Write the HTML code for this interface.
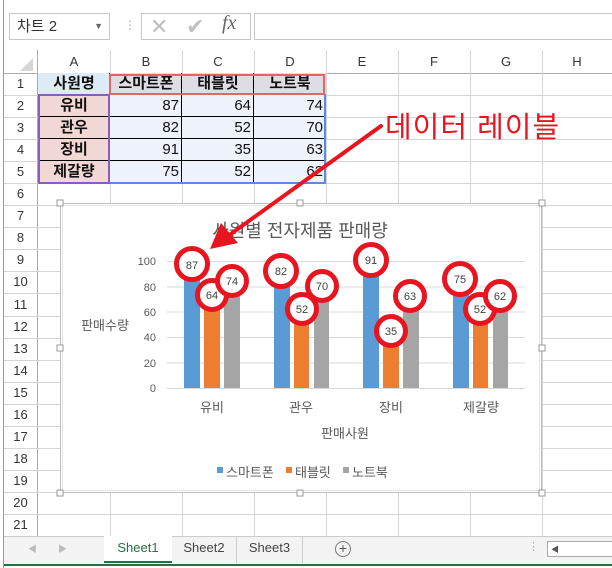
<!DOCTYPE html>
<html><head><meta charset="utf-8"><style>
*{margin:0;padding:0;box-sizing:border-box}
body{width:612px;height:568px;overflow:hidden;background:#fff;font-family:"Liberation Sans","Noto Sans CJK KR",sans-serif;position:relative}
.a{position:absolute}
.vl{position:absolute;width:1px;background:#d4d4d4}
.hl{position:absolute;height:1px;background:#d4d4d4}
.rh{position:absolute;left:3px;width:35px;text-align:center;font-size:13px;color:#333;height:22px;line-height:22px}
.ch{position:absolute;top:50px;height:23px;line-height:23px;text-align:center;font-size:13px;color:#333}
.c{position:absolute;height:22px;line-height:22px;font-size:15px;color:#111}
.b{font-weight:bold;font-size:15px}
</style></head><body>
<div class="a" style="left:3px;top:0;width:1px;height:568px;background:#999"></div>
<div class="a" style="left:9px;top:13px;width:101px;height:27px;border:1px solid #c6c6c6;font-size:15px;line-height:25px;padding-left:7px;color:#333">차트 2<span style="position:absolute;right:6px;top:0;font-size:9px;color:#666">▼</span></div>
<div class="a" style="left:124px;top:18px;font-size:12px;color:#aaa">⋮</div>
<div class="a" style="left:141px;top:13px;width:110px;height:27px;border:1px solid #c6c6c6"></div>
<div class="a" style="left:150px;top:14px;font-size:22px;color:#c0c0c0">✕</div>
<div class="a" style="left:186px;top:14px;font-size:22px;color:#c0c0c0">✔</div>
<div class="a" style="left:222px;top:12px;font-size:20px;color:#666;font-style:italic;font-family:'Liberation Serif',serif">fx</div>
<div class="a" style="left:254px;top:13px;width:360px;height:27px;border:1px solid #c6c6c6"></div>
<div class="a" style="left:20px;top:58px;width:0;height:0;border-left:13px solid transparent;border-bottom:13px solid #d6d6d6"></div>
<div class="hl" style="left:4px;top:73px;width:608px;background:#ababab"></div>
<div class="vl" style="left:37px;top:50px;height:486px;background:#ababab"></div>
<div class="vl" style="left:110px;top:50px;height:486px"></div>
<div class="vl" style="left:182px;top:50px;height:486px"></div>
<div class="vl" style="left:254px;top:50px;height:486px"></div>
<div class="vl" style="left:326px;top:50px;height:486px"></div>
<div class="vl" style="left:398px;top:50px;height:486px"></div>
<div class="vl" style="left:470px;top:50px;height:486px"></div>
<div class="vl" style="left:542px;top:50px;height:486px"></div>
<div class="ch" style="left:38px;width:72px">A</div><div class="ch" style="left:110px;width:72px">B</div><div class="ch" style="left:182px;width:72px">C</div><div class="ch" style="left:254px;width:72px">D</div><div class="ch" style="left:326px;width:72px">E</div><div class="ch" style="left:398px;width:72px">F</div><div class="ch" style="left:470px;width:72px">G</div><div class="ch" style="left:542px;width:70px">H</div>
<div id="rows"></div>
<script>
var h='';for(var i=0;i<21;i++){var t=73+i*22.05;h+='<div class="rh" style="top:'+t+'px">'+(i+1)+'</div><div class="hl" style="left:4px;top:'+(t+22)+'px;width:608px"></div>';}
document.getElementById('rows').innerHTML=h;
</script>
<div class="a" style="left:38px;top:73px;width:72px;height:22px;background:#ddebf7"></div>
<div class="a" style="left:110px;top:73px;width:216px;height:22px;background:#e0dce6"></div>
<div class="a" style="left:38px;top:95px;width:72px;height:88px;background:#f2d8d4"></div>
<div class="a" style="left:110px;top:95px;width:216px;height:88px;background:#eef2fb"></div>
<div class="a" style="left:38px;top:94px;width:288px;height:1px;background:#000"></div>
<div class="a" style="left:38px;top:116px;width:288px;height:1px;background:#000"></div>
<div class="a" style="left:38px;top:138px;width:288px;height:1px;background:#000"></div>
<div class="a" style="left:38px;top:160px;width:288px;height:1px;background:#000"></div>
<div class="a" style="left:181px;top:73px;width:1px;height:110px;background:#000"></div>
<div class="a" style="left:253px;top:73px;width:1px;height:110px;background:#000"></div>
<div class="a" style="left:109px;top:73px;width:1px;height:110px;background:#000"></div>
<div class="a" style="left:109px;top:74px;width:216px;height:21px;border:2px solid #e56565"></div>
<div class="a" style="left:38px;top:94px;width:72px;height:90px;border:2px solid #8a5bc0"></div>
<div class="a" style="left:110px;top:94px;width:216px;height:90px;border:2px solid #5b8ce0;border-top:none;border-left:none"></div>
<div class="c b" style="left:38px;top:73px;width:72px;text-align:center">사원명</div>
<div class="c b" style="left:110px;top:73px;width:72px;text-align:center">스마트폰</div>
<div class="c b" style="left:182px;top:73px;width:72px;text-align:center">태블릿</div>
<div class="c b" style="left:254px;top:73px;width:72px;text-align:center">노트북</div>
<div class="c b" style="left:38px;top:95px;width:72px;text-align:center">유비</div>
<div class="c b" style="left:38px;top:117px;width:72px;text-align:center">관우</div>
<div class="c b" style="left:38px;top:139px;width:72px;text-align:center">장비</div>
<div class="c b" style="left:38px;top:161px;width:72px;text-align:center">제갈량</div>
<div class="c" style="left:110px;top:95px;width:69px;text-align:right">87</div><div class="c" style="left:182px;top:95px;width:69px;text-align:right">64</div><div class="c" style="left:254px;top:95px;width:69px;text-align:right">74</div>
<div class="c" style="left:110px;top:117px;width:69px;text-align:right">82</div><div class="c" style="left:182px;top:117px;width:69px;text-align:right">52</div><div class="c" style="left:254px;top:117px;width:69px;text-align:right">70</div>
<div class="c" style="left:110px;top:139px;width:69px;text-align:right">91</div><div class="c" style="left:182px;top:139px;width:69px;text-align:right">35</div><div class="c" style="left:254px;top:139px;width:69px;text-align:right">63</div>
<div class="c" style="left:110px;top:161px;width:69px;text-align:right">75</div><div class="c" style="left:182px;top:161px;width:69px;text-align:right">52</div><div class="c" style="left:254px;top:161px;width:69px;text-align:right">62</div>
<svg class="a" style="left:0;top:0" width="612" height="568" font-family="Liberation Sans,Noto Sans CJK KR,sans-serif">
<rect x="60.5" y="203.5" width="481" height="289" fill="#fff" stroke="#bfbfbf"/>
<rect x="62.5" y="205.5" width="477" height="285" fill="none" stroke="#e6e6e6"/>
<g fill="#fff" stroke="#999"><rect x="57" y="200" width="6" height="6"/><rect x="297" y="200" width="6" height="6"/><rect x="539" y="200" width="6" height="6"/><rect x="57" y="345" width="6" height="6"/><rect x="539" y="345" width="6" height="6"/><rect x="57" y="490" width="6" height="6"/><rect x="297" y="490" width="6" height="6"/><rect x="539" y="490" width="6" height="6"/></g>
<text x="300" y="237" font-size="18" fill="#595959" text-anchor="middle">사원별 전자제품 판매량</text>
<g stroke="#d9d9d9"><line x1="167" y1="261.5" x2="525" y2="261.5"/><line x1="167" y1="287" x2="525" y2="287"/><line x1="167" y1="312" x2="525" y2="312"/><line x1="167" y1="337.5" x2="525" y2="337.5"/><line x1="167" y1="363" x2="525" y2="363"/><line x1="167" y1="388.5" x2="525" y2="388.5"/></g>
<g font-size="11" fill="#595959" text-anchor="end"><text x="156" y="265">100</text><text x="156" y="291">80</text><text x="156" y="316">60</text><text x="156" y="341">40</text><text x="156" y="367">20</text><text x="156" y="392">0</text></g>
<text x="105" y="330" font-size="13" fill="#595959" text-anchor="middle">판매수량</text>
<g fill="#5b9bd5"><rect x="184" y="277.5" width="16" height="110.5"/><rect x="274" y="284" width="16" height="104"/><rect x="363" y="272.5" width="16" height="115.5"/><rect x="453" y="292.5" width="16" height="95.5"/></g>
<g fill="#ed7d31"><rect x="204" y="306.7" width="16" height="81.3"/><rect x="294" y="322" width="15" height="66"/><rect x="383" y="343.5" width="16" height="44.5"/><rect x="473" y="322" width="15" height="66"/></g>
<g fill="#a5a5a5"><rect x="224" y="294" width="16" height="94"/><rect x="314" y="299" width="15" height="89"/><rect x="403" y="308" width="16" height="80"/><rect x="493" y="309.3" width="15" height="78.7"/></g>
<g font-size="13" fill="#595959" text-anchor="middle"><text x="212" y="412">유비</text><text x="301" y="412">관우</text><text x="391" y="412">장비</text><text x="481" y="412">제갈량</text><text x="345" y="438">판매사원</text></g>
<g fill="#fff" stroke="#e8141f" stroke-width="5"><circle cx="192" cy="264" r="15.5"/><circle cx="212" cy="295" r="14.5"/><circle cx="232" cy="281" r="14.5"/><circle cx="281" cy="271" r="15.5"/><circle cx="302" cy="309" r="14.5"/><circle cx="322" cy="286" r="14.5"/><circle cx="371" cy="260" r="15.5"/><circle cx="391" cy="331" r="14.5"/><circle cx="410" cy="296" r="14.5"/><circle cx="460" cy="279" r="15.5"/><circle cx="480" cy="309" r="14.5"/><circle cx="500" cy="296" r="14.5"/></g>
<g font-size="11" fill="#404040" text-anchor="middle"><text x="192" y="269">87</text><text x="212" y="299">64</text><text x="232" y="285">74</text><text x="281" y="275">82</text><text x="302" y="313">52</text><text x="322" y="290">70</text><text x="371" y="264">91</text><text x="391" y="335">35</text><text x="410" y="300">63</text><text x="460" y="283">75</text><text x="480" y="313">52</text><text x="500" y="300">62</text></g>
<g font-size="13" fill="#595959"><rect x="217" y="467" width="6" height="6" fill="#5b9bd5"/><text x="226" y="477">스마트폰</text><rect x="286" y="467" width="6" height="6" fill="#ed7d31"/><text x="295" y="477">태블릿</text><rect x="343" y="467" width="6" height="6" fill="#a5a5a5"/><text x="352" y="477">노트북</text></g>
<line x1="381" y1="126" x2="228" y2="236" stroke="#e8141f" stroke-width="4" stroke-linecap="round"/>
<polygon points="210,249 221,223 238,243" fill="#e8141f"/>
<text x="385" y="137" font-size="29" fill="#e8141f" letter-spacing="1">데이터 레이블</text>
</svg>
<div class="a" style="left:4px;top:536px;width:608px;height:28px;background:#f3f3f3;border-top:1px solid #ccc"></div>
<div class="a" style="left:28px;top:542px;font-size:9px;color:#bbb">◀</div>
<div class="a" style="left:58px;top:542px;font-size:9px;color:#bbb">▶</div>
<div class="a" style="left:104px;top:536px;width:68px;height:27px;background:#fff;border-bottom:2px solid #217346;font-size:13px;color:#217346;text-align:center;line-height:24px">Sheet1</div>
<div class="a" style="left:172px;top:536px;width:65px;height:27px;font-size:13px;color:#444;text-align:center;line-height:24px;border-right:1px solid #ccc">Sheet2</div>
<div class="a" style="left:237px;top:536px;width:66px;height:27px;font-size:13px;color:#444;text-align:center;line-height:24px;border-right:1px solid #ccc">Sheet3</div>
<div class="a" style="left:335px;top:541px;width:16px;height:16px;border:1px solid #777;border-radius:50%;font-size:14px;line-height:13px;text-align:center;color:#555">+</div>
<div class="a" style="left:528px;top:540px;font-size:11px;color:#aaa">⋮</div>
<div class="a" style="left:547px;top:541px;width:70px;height:16px;border:1px solid #aaa;background:#fff"></div>
<div class="a" style="left:551px;top:544px;font-size:8px;color:#555">◀</div>
<div class="a" style="left:4px;top:564px;width:608px;height:2px;background:#217346"></div>
</body></html>
